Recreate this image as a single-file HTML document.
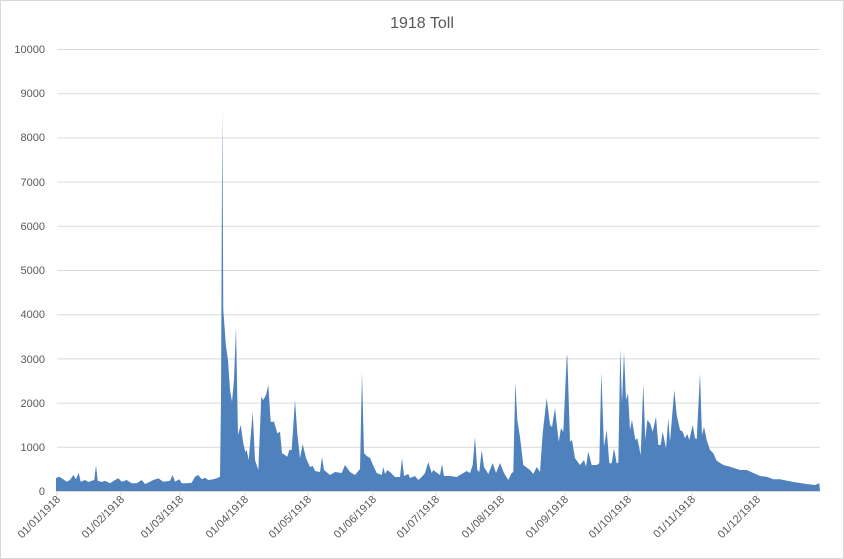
<!DOCTYPE html>
<html><head><meta charset="utf-8"><style>
html,body{margin:0;padding:0;background:#fff}
svg{display:block}
</style></head><body>
<svg width="844" height="559" viewBox="0 0 844 559" xmlns="http://www.w3.org/2000/svg" font-family="Liberation Sans, sans-serif">
<rect x="0.5" y="0.5" width="843" height="558" fill="#fff" stroke="#d9d9d9"/>
<text x="422" y="28" text-anchor="middle" font-size="16" fill="#595959">1918 Toll</text>
<g stroke="#d9d9d9" stroke-width="1">
<line x1="57" x2="820" y1="49.5" y2="49.5"/>
<line x1="57" x2="820" y1="93.7" y2="93.7"/>
<line x1="57" x2="820" y1="137.9" y2="137.9"/>
<line x1="57" x2="820" y1="182.1" y2="182.1"/>
<line x1="57" x2="820" y1="226.3" y2="226.3"/>
<line x1="57" x2="820" y1="270.5" y2="270.5"/>
<line x1="57" x2="820" y1="314.7" y2="314.7"/>
<line x1="57" x2="820" y1="358.9" y2="358.9"/>
<line x1="57" x2="820" y1="403.1" y2="403.1"/>
<line x1="57" x2="820" y1="447.3" y2="447.3"/>
</g>
<g font-size="11" fill="#595959" text-anchor="end">
<text x="45" y="53">10000</text>
<text x="45" y="97">9000</text>
<text x="45" y="141">8000</text>
<text x="45" y="186">7000</text>
<text x="45" y="230">6000</text>
<text x="45" y="274">5000</text>
<text x="45" y="318">4000</text>
<text x="45" y="363">3000</text>
<text x="45" y="407">2000</text>
<text x="45" y="451">1000</text>
<text x="45" y="495">0</text>
</g>
<polygon fill="#4f81bd" points="56,491 56,478 59.3,476.7 63.3,479.3 66.7,481.7 70,480 73.3,475 76,479.3 78.7,472.7 80.7,481.7 85,480 88.3,482 91.7,480.7 94.3,480 96,465 97.7,480.7 101.7,482 105,480.7 110,483.3 115,480 118.3,478.3 121.7,481.7 126.7,480 131.7,483.3 136.7,483.3 141.7,480 145,484 150,481.7 153.3,480 158.3,478.3 163.3,481.7 170,480.7 172.7,475 175,481.7 179.3,479.3 181.7,483.3 186.7,483.3 191.7,482.7 195,476.7 198.3,475 201.7,479.3 205,477.7 208.3,480 213.3,479.3 216.7,478.3 220,476.7 221,400 222.3,109 223.3,310 226,346.7 228,360 230,390 232,401.7 234,380 236,326.7 238,435 240.7,425 243.3,443.3 245.3,452 246.7,450 248.7,460 252.7,411.7 255,460 258.3,470 261.3,396.7 263.3,400 266,395 268.3,385 270.7,421.7 274,421.7 277.3,433.3 280,431.7 282,453.3 285,455 287.3,456.7 289.3,450 291.7,450 295,400 297.3,433.3 300,458.3 302.7,444 306,458 310,467 312.7,466 315,471 320,472 322,457 324,470 330,475 335,472 341.7,473 345,465 350,472 355,475 360,469 362,372 364,453 366.7,456 370,458 373,465 376.7,473 381.7,475 383.3,467 385,474 387.3,470 390,472 395,477 400,477 402,458 404,476 408.3,474 410,478 415,476 418.3,480 421.7,477 425,473 428.3,462 431.7,473 433.3,470 440,475 442,464 444,476 450,476 456.7,477 463.3,473 466.7,471 470,473 472.7,465 475,437 477.3,470 479.3,472 481.7,450 484,467 488.3,474 492.7,463 496,473 500,463 504,473 508.3,480 511.7,473 513.3,472 515.3,382 517.3,420 520,437 523.3,465 530,470 533.3,474 536.7,467 540,472 542.7,433 546.7,398 550,425 552,427 555,408 558.7,442 561,428 563.3,432 566.7,357 567.3,355 570,441.7 572,440 575,458.3 580,465 584,460 586,466.7 588.3,451.7 591.7,465 596.7,465 599.3,463.3 601.3,371.7 604,446.7 606.7,430 609.3,463.3 611.7,463.3 614,448.3 616.7,463.3 618.3,462.7 620.3,348.3 622,403.3 624,351.7 626,400 628,393.3 630,430 632,420 635.3,440 637.3,438.3 640.7,455 643.3,383.3 645.3,440 647.3,420 650,423.3 652.7,431.7 656,416.7 658.3,445 660.7,445 662.7,431.7 666,448.3 668.3,418.3 670,441.7 674.3,390 676.7,415 680,430 682.7,431.7 685,438.3 687.3,434 689.3,440 692.7,425 695,438.3 696.7,439.3 700,373.3 702,435 704,426.7 706.7,440 710,450 713.3,453.3 716.7,460.7 723.3,465 730,466.7 740,470 746.7,470 760,476 766.7,476.7 773.3,479.3 780,479.3 793.3,482 806.7,484 815,485 819.3,483.3 820,491"/>
<line x1="56" x2="820" y1="491.5" y2="491.5" stroke="#d9d9d9"/>
<g stroke="#d9d9d9">
<line x1="57" x2="57" y1="491" y2="496"/><line x1="121" x2="121" y1="491" y2="496"/><line x1="180" x2="180" y1="491" y2="496"/><line x1="245" x2="245" y1="491" y2="496"/><line x1="308" x2="308" y1="491" y2="496"/><line x1="373" x2="373" y1="491" y2="496"/><line x1="436" x2="436" y1="491" y2="496"/><line x1="501" x2="501" y1="491" y2="496"/><line x1="565" x2="565" y1="491" y2="496"/><line x1="628" x2="628" y1="491" y2="496"/><line x1="692" x2="692" y1="491" y2="496"/><line x1="757" x2="757" y1="491" y2="496"/>
</g>
<g font-size="11" fill="#595959" text-anchor="end">
<text transform="translate(61,500) rotate(-45)">01/01/1918</text>
<text transform="translate(125,500) rotate(-45)">01/02/1918</text>
<text transform="translate(184,500) rotate(-45)">01/03/1918</text>
<text transform="translate(249,500) rotate(-45)">01/04/1918</text>
<text transform="translate(312,500) rotate(-45)">01/05/1918</text>
<text transform="translate(377,500) rotate(-45)">01/06/1918</text>
<text transform="translate(440,500) rotate(-45)">01/07/1918</text>
<text transform="translate(505,500) rotate(-45)">01/08/1918</text>
<text transform="translate(569,500) rotate(-45)">01/09/1918</text>
<text transform="translate(632,500) rotate(-45)">01/10/1918</text>
<text transform="translate(696,500) rotate(-45)">01/11/1918</text>
<text transform="translate(761,500) rotate(-45)">01/12/1918</text>
</g>
</svg>
</body></html>
